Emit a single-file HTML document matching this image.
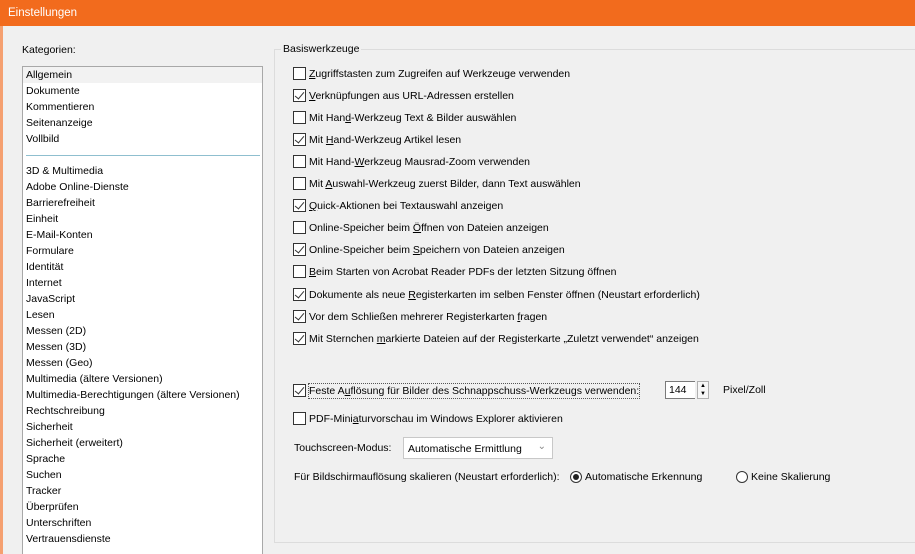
<!DOCTYPE html>
<html><head><meta charset="utf-8"><style>
*{margin:0;padding:0;box-sizing:border-box}
html,body{overflow:hidden}
body{width:915px;height:554px;background:#f0f0f0;font-family:"Liberation Sans",sans-serif;font-size:10.5px;color:#000;position:relative}
.title{position:absolute;left:0;top:0;width:915px;height:26px;background:#f26b1d;color:#fff;font-size:11.5px;line-height:26px;padding-left:8px}
.lb{position:absolute;left:0;top:26px;width:3px;height:528px;background:#f5a070}
.abs{position:absolute;white-space:nowrap}
.list{position:absolute;left:22px;top:66px;width:241px;height:500px;background:#fff;border:1px solid #a8a8a8}
.list div{position:absolute;left:3px;line-height:16px}
.sep{position:absolute;left:3px;top:88px;width:234px;height:1px;background:#8fbfcf}
.grp{position:absolute;left:274px;top:49px;width:660px;height:494px;border:1px solid #dcdcdc;border-right:none}
.cb{position:absolute;left:293px;width:13px;height:13px;border:1px solid #333;background:#fff}
.cb.c::after{content:"";position:absolute;left:3px;top:0px;width:4px;height:8px;border-right:1.3px solid #333;border-bottom:1.3px solid #333;transform:rotate(40deg)}
.t{position:absolute;left:309px;white-space:nowrap;line-height:14px}
</style></head><body>
<div class="title">Einstellungen</div>
<div class="lb"></div>
<div class="abs" style="left:22px;top:44px">Kategorien:</div>
<div class="list">
<div style="top:0px;left:0;width:239px;background:#f2f2f2;padding-left:3px">Allgemein</div>
<div style="top:16px">Dokumente</div>
<div style="top:32px">Kommentieren</div>
<div style="top:48px">Seitenanzeige</div>
<div style="top:64px">Vollbild</div>
<span class="sep"></span>
<div style="top:96px">3D &amp; Multimedia</div>
<div style="top:112px">Adobe Online-Dienste</div>
<div style="top:128px">Barrierefreiheit</div>
<div style="top:144px">Einheit</div>
<div style="top:160px">E-Mail-Konten</div>
<div style="top:176px">Formulare</div>
<div style="top:192px">Identität</div>
<div style="top:208px">Internet</div>
<div style="top:224px">JavaScript</div>
<div style="top:240px">Lesen</div>
<div style="top:256px">Messen (2D)</div>
<div style="top:272px">Messen (3D)</div>
<div style="top:288px">Messen (Geo)</div>
<div style="top:304px">Multimedia (ältere Versionen)</div>
<div style="top:320px">Multimedia-Berechtigungen (ältere Versionen)</div>
<div style="top:336px">Rechtschreibung</div>
<div style="top:352px">Sicherheit</div>
<div style="top:368px">Sicherheit (erweitert)</div>
<div style="top:384px">Sprache</div>
<div style="top:400px">Suchen</div>
<div style="top:416px">Tracker</div>
<div style="top:432px">Überprüfen</div>
<div style="top:448px">Unterschriften</div>
<div style="top:464px">Vertrauensdienste</div>
</div>
<div class="grp"></div>
<div class="abs" style="left:281px;top:43px;background:#f0f0f0;padding:0 2px">Basiswerkzeuge</div>

<div class="cb" style="top:67px"></div><div class="t" style="top:67px"><u>Z</u>ugriffstasten zum Zugreifen auf Werkzeuge verwenden</div>
<div class="cb c" style="top:89px"></div><div class="t" style="top:89px"><u>V</u>erknüpfungen aus URL-Adressen erstellen</div>
<div class="cb" style="top:111px"></div><div class="t" style="top:111px">Mit Han<u>d</u>-Werkzeug Text &amp; Bilder auswählen</div>
<div class="cb c" style="top:133px"></div><div class="t" style="top:133px">Mit <u>H</u>and-Werkzeug Artikel lesen</div>
<div class="cb" style="top:155px"></div><div class="t" style="top:155px">Mit Hand-<u>W</u>erkzeug Mausrad-Zoom verwenden</div>
<div class="cb" style="top:177px"></div><div class="t" style="top:177px">Mit <u>A</u>uswahl-Werkzeug zuerst Bilder, dann Text auswählen</div>
<div class="cb c" style="top:199px"></div><div class="t" style="top:199px"><u>Q</u>uick-Aktionen bei Textauswahl anzeigen</div>
<div class="cb" style="top:221px"></div><div class="t" style="top:221px">Online-Speicher beim <u>Ö</u>ffnen von Dateien anzeigen</div>
<div class="cb c" style="top:243px"></div><div class="t" style="top:243px">Online-Speicher beim <u>S</u>peichern von Dateien anzeigen</div>
<div class="cb" style="top:265px"></div><div class="t" style="top:265px"><u>B</u>eim Starten von Acrobat Reader PDFs der letzten Sitzung öffnen</div>
<div class="cb c" style="top:288px"></div><div class="t" style="top:288px">Dokumente als neue <u>R</u>egisterkarten im selben Fenster öffnen (Neustart erforderlich)</div>
<div class="cb c" style="top:310px"></div><div class="t" style="top:310px">Vor dem Schließen mehrerer Registerkarten <u>f</u>ragen</div>
<div class="cb c" style="top:332px"></div><div class="t" style="top:332px">Mit Sternchen <u>m</u>arkierte Dateien auf der Registerkarte „Zuletzt verwendet“ anzeigen</div>

<div class="cb c" style="top:384px"></div><div class="t" style="top:384px;outline:1px dotted #555">Feste A<u>u</u>flösung für Bilder des Schnappschuss-Werkzeugs verwenden:</div>
<div class="abs" style="left:665px;top:381px;width:30px;height:18px;background:#fff;border:1px solid #7a7a7a;border-right:none;padding:2px 3px">144</div>
<div class="abs" style="left:697px;top:381px;width:12px;height:18px;border:1px solid #b0b0b0;background:#f7f7f7;font-size:6px;line-height:8px;text-align:center">▲<br>▼</div>
<div class="abs" style="left:723px;top:384px">Pixel/Zoll</div>

<div class="cb" style="top:412px"></div><div class="t" style="top:412px">PDF-Mini<u>a</u>turvorschau im Windows Explorer aktivieren</div>

<div class="abs" style="left:294px;top:442px">Touchscreen-Modus:</div>
<div class="abs" style="left:403px;top:437px;width:150px;height:22px;background:#fff;border:1px solid #c8c8c8;padding:5px 4px">Automatische Ermittlung<span style="position:absolute;right:6px;top:3px;color:#888;font-size:10px">&#8964;</span></div>

<div class="abs" style="left:294px;top:471px">Für Bildschirmauflösung skalieren (Neustart erforderlich):</div>
<div class="abs" style="left:570px;top:471px;width:12px;height:12px;border:1px solid #333;border-radius:50%;background:#fff"><span style="position:absolute;left:2px;top:2px;width:6px;height:6px;border-radius:50%;background:#222"></span></div>
<div class="abs" style="left:585px;top:471px">Automatische Erkennung</div>
<div class="abs" style="left:736px;top:471px;width:12px;height:12px;border:1px solid #333;border-radius:50%;background:#fff"></div>
<div class="abs" style="left:751px;top:471px">Keine Skalierung</div>
</body></html>
